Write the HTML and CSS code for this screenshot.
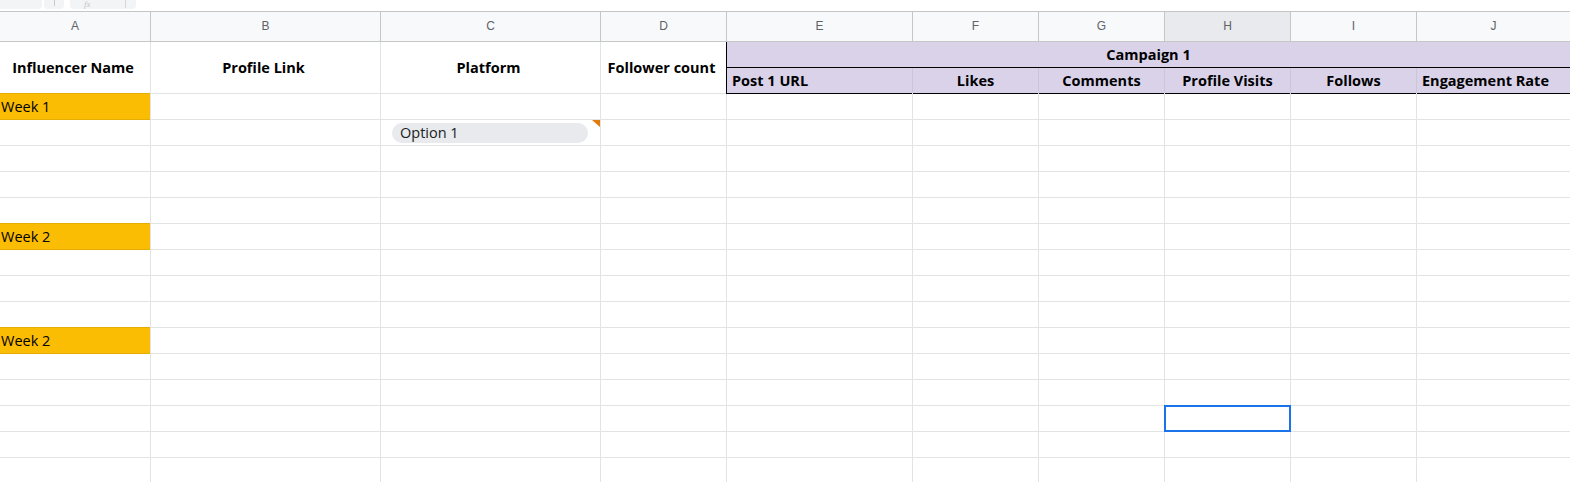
FILE: index.html
```html
<!DOCTYPE html>
<html lang="en">
<head>
<meta charset="utf-8">
<title>Influencer Tracker</title>
<link rel="stylesheet" href="styles.css">
</head>
<body>
<div class="toolbar">
  <div class="tb-box tb-name"></div>
  <div class="tb-box tb-drop"><span class="tb-tick"></span></div>
  <div class="tb-box tb-fx"><span class="fx">fx</span><span class="tb-sep"></span></div>
</div>

<div class="colheads">
  <div class="ch">A</div><div class="ch">B</div><div class="ch">C</div><div class="ch">D</div><div class="ch">E</div>
  <div class="ch">F</div><div class="ch">G</div><div class="ch ch-sel">H</div><div class="ch">I</div><div class="ch">J</div>
</div>

<div class="sheet">
  <div class="c hd span2 mid">Influencer Name</div>
  <div class="c hd span2 mid">Profile Link</div>
  <div class="c hd span2 mid">Platform</div>
  <div class="c hd span2 mid">Follower count</div>
  <div class="c hd campaign">Campaign 1</div>
  <div class="c hd sub sub-first left">Post 1 URL</div>
  <div class="c hd sub">Likes</div>
  <div class="c hd sub">Comments</div>
  <div class="c hd sub">Profile Visits</div>
  <div class="c hd sub">Follows</div>
  <div class="c hd sub left">Engagement Rate</div>

  <div class="c week">Week 1</div><div class="c"></div><div class="c"></div><div class="c"></div><div class="c"></div><div class="c"></div><div class="c"></div><div class="c"></div><div class="c"></div><div class="c"></div>
  <div class="c"></div><div class="c"></div><div class="c dropcell"><span class="chip">Option 1</span></div><div class="c"></div><div class="c"></div><div class="c"></div><div class="c"></div><div class="c"></div><div class="c"></div><div class="c"></div>
  <div class="c"></div><div class="c"></div><div class="c"></div><div class="c"></div><div class="c"></div><div class="c"></div><div class="c"></div><div class="c"></div><div class="c"></div><div class="c"></div>
  <div class="c"></div><div class="c"></div><div class="c"></div><div class="c"></div><div class="c"></div><div class="c"></div><div class="c"></div><div class="c"></div><div class="c"></div><div class="c"></div>
  <div class="c"></div><div class="c"></div><div class="c"></div><div class="c"></div><div class="c"></div><div class="c"></div><div class="c"></div><div class="c"></div><div class="c"></div><div class="c"></div>
  <div class="c week">Week 2</div><div class="c"></div><div class="c"></div><div class="c"></div><div class="c"></div><div class="c"></div><div class="c"></div><div class="c"></div><div class="c"></div><div class="c"></div>
  <div class="c"></div><div class="c"></div><div class="c"></div><div class="c"></div><div class="c"></div><div class="c"></div><div class="c"></div><div class="c"></div><div class="c"></div><div class="c"></div>
  <div class="c"></div><div class="c"></div><div class="c"></div><div class="c"></div><div class="c"></div><div class="c"></div><div class="c"></div><div class="c"></div><div class="c"></div><div class="c"></div>
  <div class="c"></div><div class="c"></div><div class="c"></div><div class="c"></div><div class="c"></div><div class="c"></div><div class="c"></div><div class="c"></div><div class="c"></div><div class="c"></div>
  <div class="c week">Week 2</div><div class="c"></div><div class="c"></div><div class="c"></div><div class="c"></div><div class="c"></div><div class="c"></div><div class="c"></div><div class="c"></div><div class="c"></div>
  <div class="c"></div><div class="c"></div><div class="c"></div><div class="c"></div><div class="c"></div><div class="c"></div><div class="c"></div><div class="c"></div><div class="c"></div><div class="c"></div>
  <div class="c"></div><div class="c"></div><div class="c"></div><div class="c"></div><div class="c"></div><div class="c"></div><div class="c"></div><div class="c"></div><div class="c"></div><div class="c"></div>
  <div class="c"></div><div class="c"></div><div class="c"></div><div class="c"></div><div class="c"></div><div class="c"></div><div class="c"></div><div class="c selected"></div><div class="c"></div><div class="c"></div>
  <div class="c"></div><div class="c"></div><div class="c"></div><div class="c"></div><div class="c"></div><div class="c"></div><div class="c"></div><div class="c"></div><div class="c"></div><div class="c"></div>
  <div class="c"></div><div class="c"></div><div class="c"></div><div class="c"></div><div class="c"></div><div class="c"></div><div class="c"></div><div class="c"></div><div class="c"></div><div class="c"></div>
</div>
</body>
</html>
```
FILE: styles.css
```css
html, body {
  margin: 0;
  padding: 0;
  background: #ffffff;
  overflow: hidden;
  width: 1570px;
  height: 482px;
}

/* ---------- top toolbar remnant ---------- */
.toolbar {
  height: 11px;
  display: flex;
  align-items: flex-end;
  gap: 2px;
  overflow: hidden;
  padding-bottom: 2px;
  box-sizing: border-box;
}
.tb-box {
  height: 24px;
  flex: none;
  background: #f3f4f5;
  border-radius: 0 0 4px 4px;
  display: flex;
  align-items: flex-end;
}
.tb-name { width: 42px; border-radius: 0 0 4px 0; }
.tb-drop { width: 20px; justify-content: center; }
.tb-tick { width: 1px; height: 6px; background: #c9cbce; margin-bottom: 3px; }
.tb-fx { width: 66px; margin-left: 4px; align-items: center; }
.fx {
  font-family: "Liberation Serif", serif;
  font-style: italic;
  font-size: 9px;
  line-height: 9px;
  color: #c4c6c9;
  margin-left: 14px;
  align-self: flex-end;
}
.tb-sep { width: 1px; height: 8px; background: #d4d6d9; margin-left: 34px; align-self: flex-end; margin-bottom: 1px; }

/* ---------- column letters ---------- */
.colheads {
  display: grid;
  grid-template-columns: 150px 229px 219px 125px 185px 125px 125px 125px 125px 153px;
  column-gap: 1px;
  background: #c4c7c5;
  border-top: 1px solid #c4c7c5;
  border-bottom: 1px solid #c4c7c5;
}
.ch {
  height: 29px;
  line-height: 29px;
  background: #f8f9fa;
  text-align: center;
  font-family: "Liberation Sans", Arial, sans-serif;
  font-size: 12px;
  color: #5f6368;
}
.ch-sel { background: #e8eaed; }

/* ---------- cell grid ---------- */
.sheet {
  display: grid;
  grid-template-columns: 150px 229px 219px 125px 185px 125px 125px 125px 125px 153px;
  grid-template-rows: repeat(17, 25px);
  gap: 1px;
  background: #e2e3e3;
}
.c {
  background: #ffffff;
  font-family: "Open Sans", "Liberation Sans", sans-serif;
  font-size: 14.5px;
  line-height: 25px;
  color: #000000;
  white-space: nowrap;
  overflow: hidden;
  padding: 0 4px;
  min-width: 0;
}
.hd {
  font-weight: 700;
  text-align: center;
}
.span2 { grid-row: span 2; }
.mid {
  display: flex;
  align-items: center;
  justify-content: center;
  padding: 0 8px 0 4px;
}
.campaign {
  grid-column: 5 / span 6;
  background: #d9d2e9;
  box-shadow: -1px 0 0 #000, 0 1px 0 #000, -1px 1px 0 #000;
}
.sub {
  background: #d9d2e9;
  box-shadow: 0 1px 0 #000, 1px 0 0 #cbc6d3;
}
.sub-first {
  box-shadow: -1px 0 0 #000, 0 1px 0 #000, -1px 1px 0 #000, 1px 0 0 #cbc6d3;
}
.left { text-align: left; padding-left: 5px; }

.week {
  background: #fbbc04;
  padding-left: 1px;
  box-shadow: 0 -1px 0 #e6ad05, 0 1px 0 #e6ad05;
}

.dropcell {
  position: relative;
  padding: 3px 0 0 11px;
}
.dropcell::after {
  content: "";
  position: absolute;
  top: 0;
  right: 0;
  width: 8px;
  height: 7px;
  background: #e07b0c;
  clip-path: polygon(0 0, 100% 0, 100% 100%);
}
.chip {
  display: block;
  width: 188px;
  height: 20px;
  line-height: 20px;
  padding-left: 8px;
  border-radius: 10px;
  background: #e8eaed;
  color: #202124;
}

.selected {
  position: relative;
  z-index: 1;
  outline: 2px solid #1a73e8;
  outline-offset: -1px;
}
```
